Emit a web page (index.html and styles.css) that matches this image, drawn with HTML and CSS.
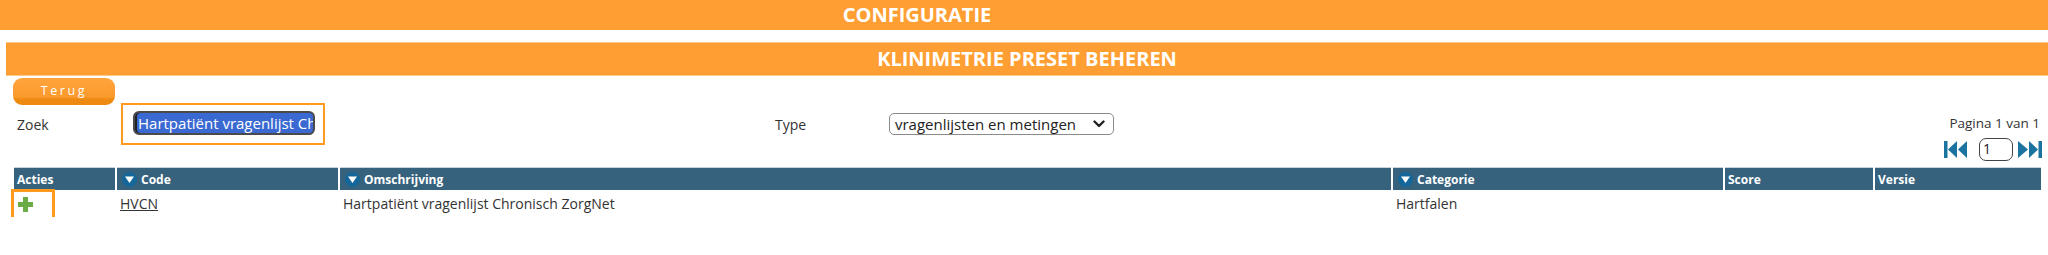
FILE: index.html
```html
<!DOCTYPE html>
<html lang="nl">
<head>
<meta charset="utf-8">
<title>Klinimetrie preset beheren</title>
<link rel="stylesheet" href="styles.css">
</head>
<body>
<div class="topbar">CONFIGURATIE</div>
<div class="page">
  <div class="titlebar">KLINIMETRIE PRESET BEHEREN</div>
  <button class="btn-back" type="button">Terug</button>
  <div class="controls">
    <div class="filters">
      <label class="lbl lbl-zoek">Zoek</label>
      <div class="focusbox">
        <input class="search" type="text" value="Hartpatiënt vragenlijst Chronisch ZorgNet" readonly>
      </div>
      <label class="lbl lbl-type">Type</label>
      <div class="select">
        <span>vragenlijsten en metingen</span>
        <svg class="chev" width="12" height="8" viewBox="0 0 12 8"><path d="M1.5 1.5 L6 6 L10.5 1.5" fill="none" stroke="#222" stroke-width="2.4" stroke-linecap="round" stroke-linejoin="round"/></svg>
      </div>
    </div>
    <div class="pager">
      <div class="pageinfo">Pagina 1 van 1</div>
      <div class="nav">
        <svg width="13" height="17" viewBox="0 0 13 17"><rect x="0" y="0" width="3.5" height="17" fill="#1b73a0"/><path d="M13 0 L4 8.5 L13 17 Z" fill="#1b73a0"/></svg>
        <svg width="9" height="17" viewBox="0 0 9 17"><path d="M9 0 L0 8.5 L9 17 Z" fill="#1b73a0"/></svg>
        <span class="pagebox">1</span>
        <svg width="10" height="17" viewBox="0 0 10 17"><path d="M0 0 L10 8.5 L0 17 Z" fill="#1b73a0"/></svg>
        <svg width="13" height="17" viewBox="0 0 13 17"><path d="M0 0 L9 8.5 L0 17 Z" fill="#1b73a0"/><rect x="9.5" y="0" width="3.5" height="17" fill="#1b73a0"/></svg>
      </div>
    </div>
  </div>
  <table class="grid">
    <colgroup>
      <col class="c-acties"><col class="c-code"><col class="c-oms"><col class="c-cat"><col class="c-score"><col class="c-versie">
    </colgroup>
    <thead>
      <tr>
        <th>Acties</th>
        <th><span class="sort"><svg width="15" height="15" viewBox="0 0 15 15"><circle cx="7.5" cy="7.5" r="7.5" fill="#15679a"/><path d="M3 4.5 L12 4.5 L7.5 11 Z" fill="#fff"/></svg>Code</span></th>
        <th><span class="sort"><svg width="15" height="15" viewBox="0 0 15 15"><circle cx="7.5" cy="7.5" r="7.5" fill="#15679a"/><path d="M3 4.5 L12 4.5 L7.5 11 Z" fill="#fff"/></svg>Omschrijving</span></th>
        <th><span class="sort"><svg width="15" height="15" viewBox="0 0 15 15"><circle cx="7.5" cy="7.5" r="7.5" fill="#15679a"/><path d="M3 4.5 L12 4.5 L7.5 11 Z" fill="#fff"/></svg>Categorie</span></th>
        <th>Score</th>
        <th>Versie</th>
      </tr>
    </thead>
    <tbody>
      <tr>
        <td><span class="addbtn"><svg width="15" height="15" viewBox="0 0 15 15"><rect x="5" y="0" width="5" height="15" fill="#6aad46"/><rect x="0" y="5" width="15" height="5" fill="#6aad46"/></svg></span></td>
        <td><a class="link" href="#">HVCN</a></td>
        <td>Hartpatiënt vragenlijst Chronisch ZorgNet</td>
        <td>Hartfalen</td>
        <td></td>
        <td></td>
      </tr>
    </tbody>
  </table>
</div>
</body>
</html>
```

FILE: styles.css
```css
* { box-sizing: border-box; }
html, body { margin: 0; padding: 0; background: #fff; }
body {
  font-family: "Open Sans", "Noto Sans", "DejaVu Sans", sans-serif;
  color: #333;
  font-size: 14px;
  width: 2048px;
  overflow: hidden;
}
.topbar {
  height: 30px;
  background: #ff9f33;
  color: #fff;
  font-weight: 700;
  font-size: 20px;
  line-height: 30px;
  text-align: center;
  padding-right: 214px;
}
.page {
  padding: 12px 0 0 6px;
}
.titlebar {
  height: 34px;
  background: #ff9f33;
  border-top: 1px solid #ffc98a;
  border-bottom: 1px solid #ffc98a;
  color: #fff;
  font-weight: 700;
  font-size: 20px;
  line-height: 31px;
  text-align: center;
}
.btn-back {
  display: block;
  margin: 2px 0 0 7px;
  width: 102px;
  height: 27px;
  border: 0;
  border-radius: 9px;
  background: linear-gradient(#ffa53c, #fb9a2d 70%, #ee8a12 78%, #ee8a12);
  color: #fff;
  font-family: "Open Sans", sans-serif;
  font-size: 12.5px;
  letter-spacing: 2.6px;
  padding: 0 0 2px 0;
  line-height: 22px;
}
.controls {
  display: flex;
  justify-content: space-between;
  align-items: flex-start;
  margin-top: -2px;
  padding-right: 8px;
}
.filters {
  display: flex;
  align-items: center;
  height: 42px;
}
.lbl { font-size: 14px; color: #333; }
.lbl-zoek { margin-left: 11px; width: 104px; }
.focusbox {
  width: 204px;
  height: 42px;
  border: 2px solid #ff9a1f;
  padding: 6px 0 0 10px;
}
.search {
  display: block;
  width: 182px;
  height: 24px;
  border: 2px solid #4a4a4a;
  border-radius: 6px;
  background: #3a69d2;
  color: #fff;
  font-family: "Open Sans", sans-serif;
  font-size: 15px;
  padding: 0 0 0 3px;
  outline: none;
  box-shadow: inset 2px 0 0 #222;
}
.lbl-type { margin-left: 450px; width: 114px; }
.select {
  display: flex;
  align-items: center;
  justify-content: space-between;
  width: 225px;
  height: 22px;
  border: 1px solid #8a8a8a;
  border-radius: 5px;
  padding: 0 8px 0 5px;
  font-size: 15px;
  color: #222;
}
.chev { display: block; }
.pager {
  display: flex;
  flex-direction: column;
  align-items: flex-end;
  padding-top: 10px;
}
.pageinfo { font-size: 13.5px; line-height: 20px; color: #333; }
.nav {
  display: flex;
  align-items: center;
  margin-top: 5px;
  margin-right: -2px;
}
.nav svg { display: block; }
.nav svg + svg { margin-left: 1px; }
.pagebox {
  display: block;
  width: 34px;
  height: 23px;
  border: 1.5px solid #444;
  border-radius: 7px;
  margin: 0 5px 0 12px;
  padding-left: 3px;
  font-size: 14px;
  line-height: 20px;
  color: #222;
}
.grid {
  table-layout: fixed;
  width: 2031px;
  border-collapse: separate;
  border-spacing: 2px 0;
  margin: 6px 0 0 6px;
}
.c-acties { width: 101px; }
.c-code { width: 221px; }
.c-oms { width: 1051px; }
.c-cat { width: 330px; }
.c-score { width: 148px; }
.c-versie { width: 166px; }
.grid th {
  height: 23px;
  background: #36627d;
  border-top: 1px solid #c9d3d9;
  color: #fff;
  font-size: 12px;
  font-weight: 700;
  text-align: left;
  padding: 0 0 0 3px;
  vertical-align: middle;
}
.sort { display: flex; align-items: center; gap: 4px; padding-left: 2px; }
.sort svg { display: block; }
.grid td {
  height: 27px;
  font-size: 14px;
  color: #333;
  padding: 0 0 0 3px;
  vertical-align: middle;
}
.grid td:first-child { padding-left: 0; }
.addbtn {
  display: inline-flex;
  align-items: center;
  justify-content: flex-start;
  width: 38px;
  height: 25px;
  padding-left: 4px;
  outline: 3px solid #ff9a1f;
  margin-top: 1px;
}
.addbtn svg { display: block; }
.link { color: #333; text-decoration: underline; }
```
